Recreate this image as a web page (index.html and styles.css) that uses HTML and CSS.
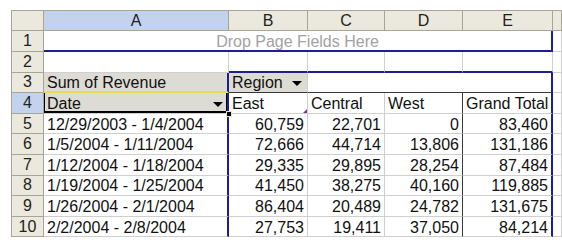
FILE: index.html
```html
<!DOCTYPE html>
<html lang="en">
<head>
    <meta charset="UTF-8">
    <title>Pivot Table - Sum of Revenue</title>
    <link rel="stylesheet" href="styles.css">
</head>
<body>
    <div class="sheet">
        <!-- column headers -->
        <div class="hd corner"></div>
        <div class="hd col sel">A</div>
        <div class="hd col">B</div>
        <div class="hd col">C</div>
        <div class="hd col">D</div>
        <div class="hd col">E</div>
        <div class="hd col"></div>

        <!-- row 1: page field drop zone -->
        <div class="hd row">1</div>
        <div class="cell drop">Drop Page Fields Here</div>
        <div class="cell"></div>

        <!-- row 2 -->
        <div class="hd row">2</div>
        <div class="cell"></div>
        <div class="cell pv-top"></div>
        <div class="cell pv-top"></div>
        <div class="cell pv-top"></div>
        <div class="cell pv-top"></div>
        <div class="cell"></div>

        <!-- row 3 -->
        <div class="hd row">3</div>
        <div class="cell field data-field pv-left">Sum of Revenue</div>
        <div class="cell field region head-line">Region <span class="arrow"></span></div>
        <div class="cell blank head-line"></div>
        <div class="cell blank head-line"></div>
        <div class="cell head-line pv-right"></div>
        <div class="cell"></div>

        <!-- row 4 -->
        <div class="hd row sel">4</div>
        <div class="cell field active pv-left">Date <span class="arrow"></span><span class="handle"></span></div>
        <div class="cell marked">East</div>
        <div class="cell">Central</div>
        <div class="cell total-line">West</div>
        <div class="cell pv-right">Grand Total</div>
        <div class="cell"></div>

        <div class="hd row">5</div>
        <div class="cell pv-left">12/29/2003 - 1/4/2004</div>
        <div class="cell num">60,759</div>
        <div class="cell num">22,701</div>
        <div class="cell num total-line">0</div>
        <div class="cell num pv-right">83,460</div>
        <div class="cell"></div>

        <div class="hd row">6</div>
        <div class="cell pv-left">1/5/2004 - 1/11/2004</div>
        <div class="cell num">72,666</div>
        <div class="cell num">44,714</div>
        <div class="cell num total-line">13,806</div>
        <div class="cell num pv-right">131,186</div>
        <div class="cell"></div>

        <div class="hd row">7</div>
        <div class="cell pv-left">1/12/2004 - 1/18/2004</div>
        <div class="cell num">29,335</div>
        <div class="cell num">29,895</div>
        <div class="cell num total-line">28,254</div>
        <div class="cell num pv-right">87,484</div>
        <div class="cell"></div>

        <div class="hd row">8</div>
        <div class="cell pv-left">1/19/2004 - 1/25/2004</div>
        <div class="cell num">41,450</div>
        <div class="cell num">38,275</div>
        <div class="cell num total-line">40,160</div>
        <div class="cell num pv-right">119,885</div>
        <div class="cell"></div>

        <div class="hd row">9</div>
        <div class="cell pv-left">1/26/2004 - 2/1/2004</div>
        <div class="cell num">86,404</div>
        <div class="cell num">20,489</div>
        <div class="cell num total-line">24,782</div>
        <div class="cell num pv-right">131,675</div>
        <div class="cell"></div>

        <div class="hd row">10</div>
        <div class="cell pv-left">2/2/2004 - 2/8/2004</div>
        <div class="cell num">27,753</div>
        <div class="cell num">19,411</div>
        <div class="cell num total-line">37,050</div>
        <div class="cell num pv-right">84,214</div>
        <div class="cell"></div>
    </div>
</body>
</html>
```

FILE: styles.css
```css
body {
    margin: 0;
    padding: 10px 0 0 11px;
    background: #fff;
    overflow: hidden;
    font-family: "Liberation Sans", Arial, sans-serif;
    font-size: 16px;
    color: #111;
}
.sheet {
    display: grid;
    grid-template-columns: 32px 185px 79px 77px 78px 90px 9px;
    grid-template-rows: 20px 21px repeat(9, 20.6px);
    border-left: 1px solid #a8a596;
    border-top: 1px solid #a8a596;
}
.hd {
    background: #ebe9dd;
    border-right: 1px solid #a8a596;
    border-bottom: 1px solid #a8a596;
    display: flex;
    align-items: center;
    justify-content: center;
    line-height: 1;
    color: #222;
}
.hd.sel {
    background: #c3d3ee;
}
.cell {
    position: relative;
    box-sizing: border-box;
    border-right: 1px solid #cfcfcf;
    border-bottom: 1px solid #cfcfcf;
    display: flex;
    align-items: center;
    padding: 2px 3px 0 3px;
    white-space: nowrap;
    line-height: 1;
}
.num {
    justify-content: flex-end;
}
.drop {
    grid-column: span 5;
    justify-content: center;
    color: #a2a2a2;
    border-right: 2px solid #1e1e8c;
    border-bottom: 2px solid #1e1e8c;
}
.pv-top {
    border-bottom: 2px solid #1e1e8c;
}
.pv-left {
    border-right: 2px solid #1e1e8c;
}
.pv-right {
    border-right: 2px solid #1e1e8c;
}
.field {
    background: #dcdbd4;
}
.data-field {
    border-bottom: 2px solid #e6dc50;
}
.region {
    justify-content: space-between;
    padding-right: 5px;
}
.head-line {
    border-bottom: 1px solid #3a3a3a;
}
.blank {
    border-right: none;
}
.total-line {
    border-right: 1px solid #3a3a3a;
}
.active {
    justify-content: space-between;
    padding-right: 4px;
    box-shadow: inset 1px 0 0 #000, inset -1px 0 0 #000, inset 0 -2px 0 #000;
}
.arrow {
    width: 0;
    height: 0;
    border-left: 5px solid transparent;
    border-right: 5px solid transparent;
    border-top: 5px solid #000;
    margin-top: 1px;
}
.handle {
    position: absolute;
    right: -5px;
    bottom: -4px;
    width: 4px;
    height: 4px;
    background: #000;
    border: 1px solid #e8e6a0;
    z-index: 2;
}
.marked::after {
    content: "";
    position: absolute;
    right: 0;
    bottom: 0;
    border-left: 4px solid transparent;
    border-bottom: 4px solid #8a2aa0;
}
```
